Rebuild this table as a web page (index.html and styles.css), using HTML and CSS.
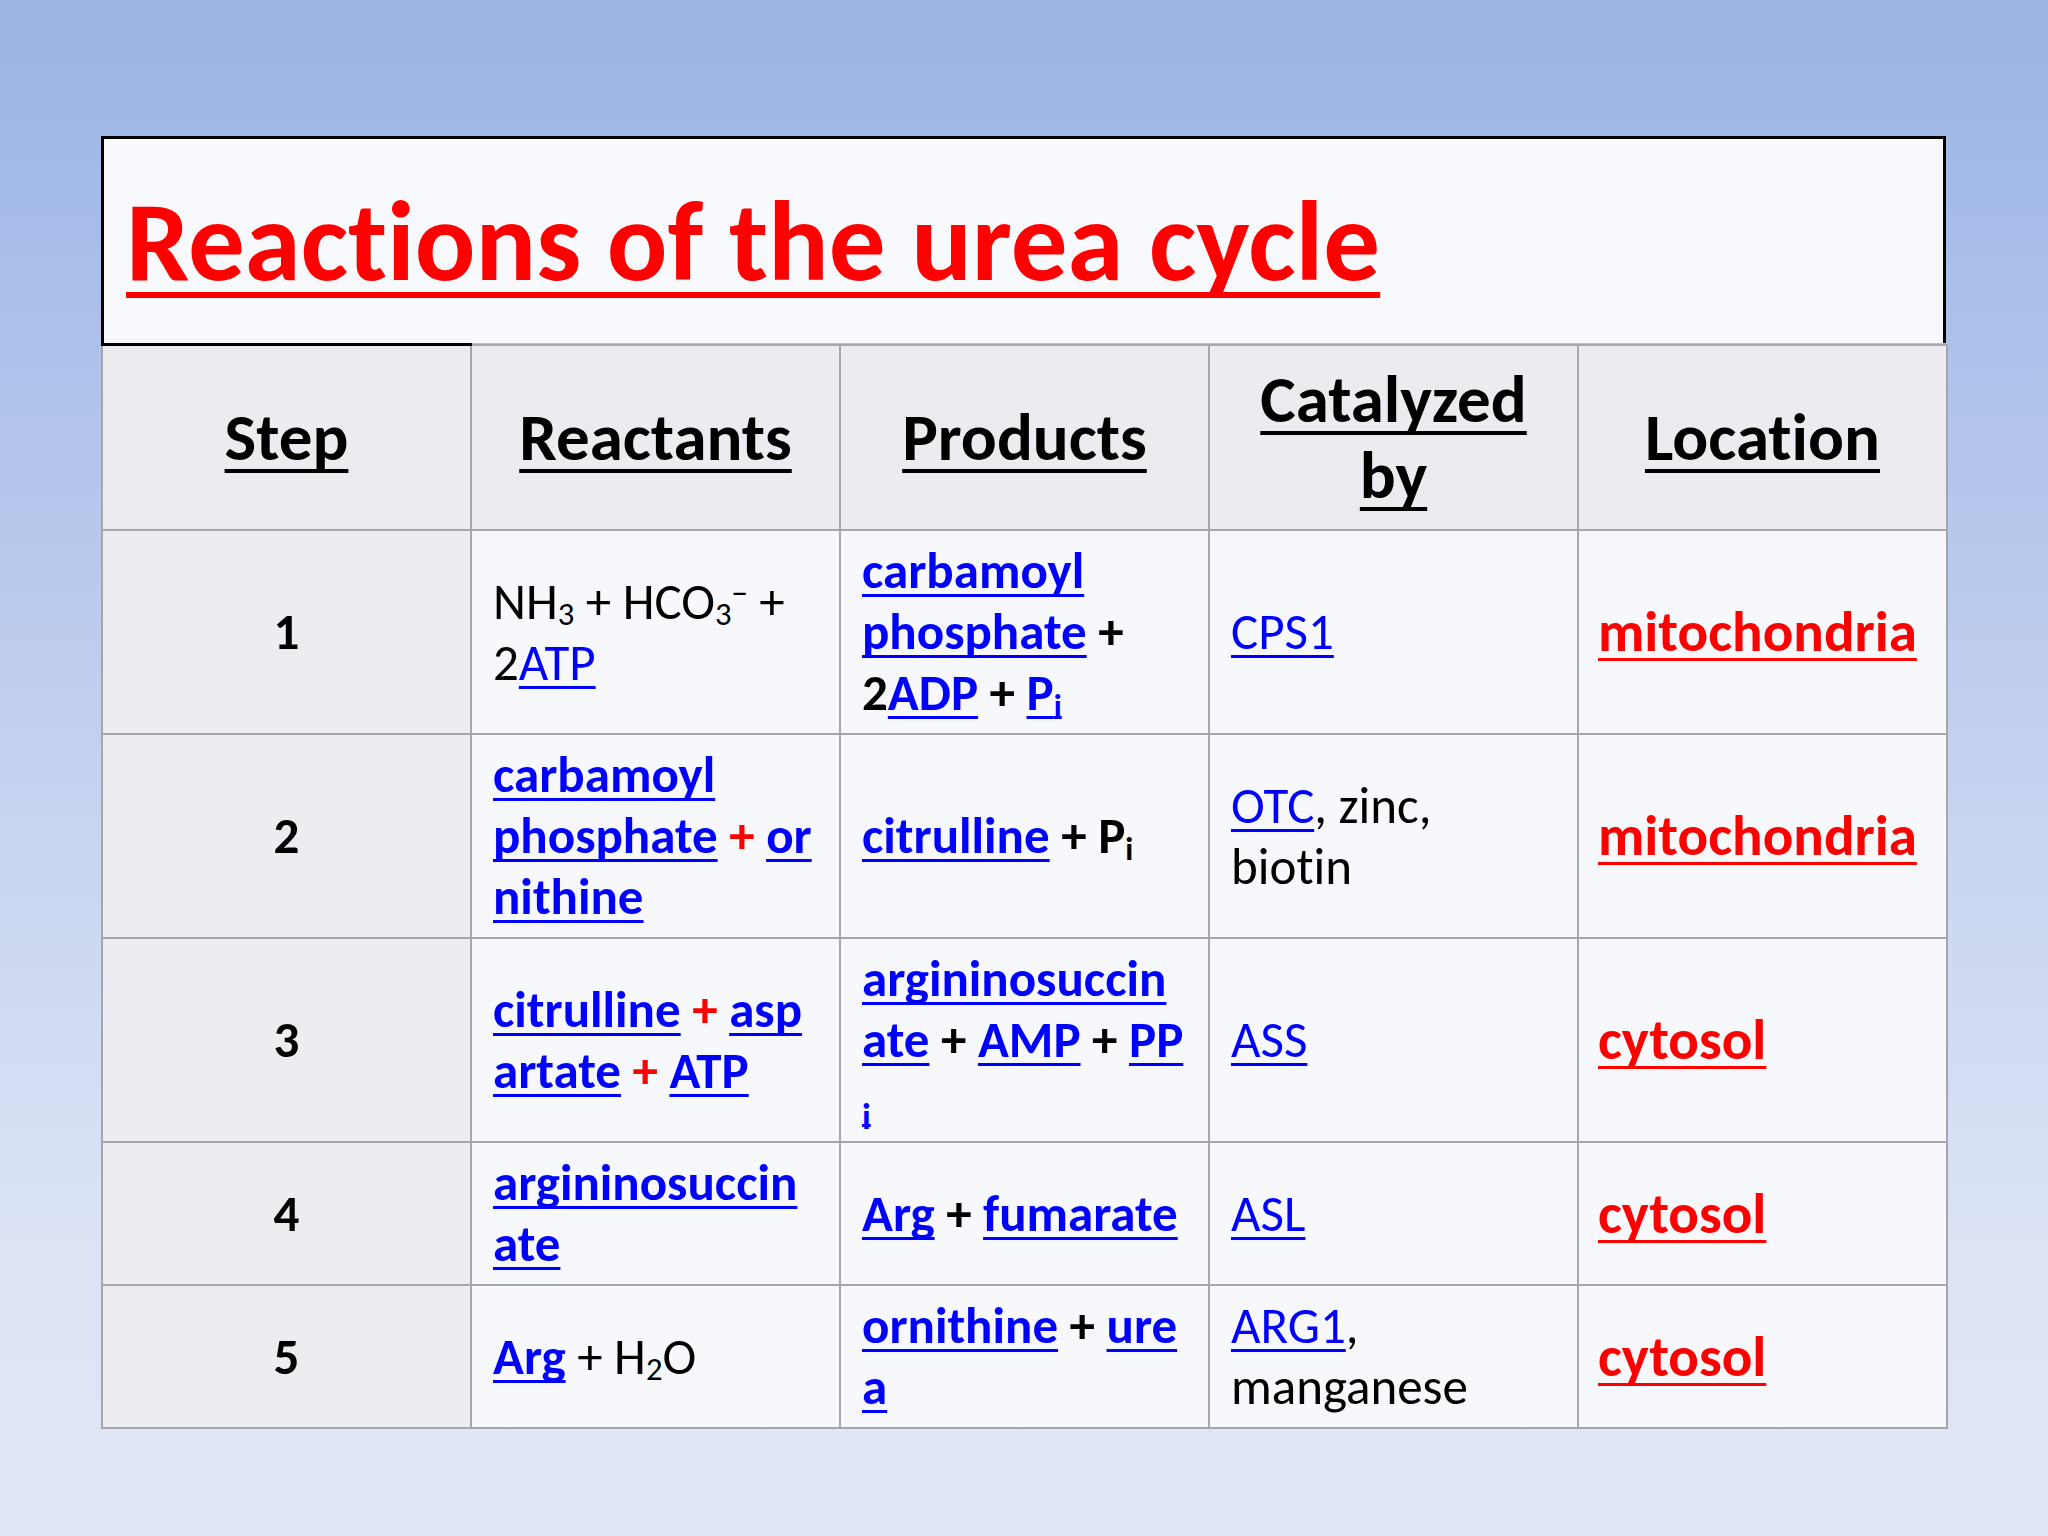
FILE: index.html
```html
<!DOCTYPE html>
<html lang="en">
<head>
<meta charset="utf-8">
<title>Reactions of the urea cycle</title>
<link rel="stylesheet" href="styles.css">
</head>
<body>
<div class="slide">
  <div class="title-box">
    <h1 class="title">Reactions of the urea cycle</h1>
  </div>
  <table class="urea">
    <colgroup>
      <col class="col"><col class="col"><col class="col"><col class="col"><col class="col">
    </colgroup>
    <thead>
      <tr class="head">
        <th class="h-step"><span class="hd">Step</span></th>
        <th><span class="hd">Reactants</span></th>
        <th><span class="hd">Products</span></th>
        <th><span class="hd">Catalyzed</span><br><span class="hd">by</span></th>
        <th><span class="hd">Location</span></th>
      </tr>
    </thead>
    <tbody>
      <tr class="tall">
        <td class="step">1</td>
        <td class="plain">NH<sub>3</sub> + HCO<sub>3</sub><sup>−</sup> +<br>2<a href="#" class="ln">ATP</a></td>
        <td class="bold"><a href="#" class="ln">carbamoyl<br>phosphate</a> +<br>2<a href="#" class="ln">ADP</a> + <a href="#" class="ln">P<sub>i</sub></a></td>
        <td class="plain"><a href="#" class="ln">CPS1</a></td>
        <td class="loc"><a href="#" class="lr">mitochondria</a></td>
      </tr>
      <tr class="tall">
        <td class="step">2</td>
        <td class="bold"><a href="#" class="ln">carbamoyl<br>phosphate</a> <span class="rp">+</span> <a href="#" class="ln">or<br>nithine</a></td>
        <td class="bold"><a href="#" class="ln">citrulline</a> + P<sub>i</sub></td>
        <td class="plain"><a href="#" class="ln">OTC</a>, zinc,<br>biotin</td>
        <td class="loc"><a href="#" class="lr">mitochondria</a></td>
      </tr>
      <tr class="tall">
        <td class="step">3</td>
        <td class="bold"><a href="#" class="ln">citrulline</a> <span class="rp">+</span> <a href="#" class="ln">asp<br>artate</a> <span class="rp">+</span> <a href="#" class="ln">ATP</a></td>
        <td class="bold"><a href="#" class="ln">argininosuccin<br>ate</a> + <a href="#" class="ln">AMP</a> + <a href="#" class="ln">PP</a><br><a href="#" class="ln"><sub class="lone">i</sub></a></td>
        <td class="plain"><a href="#" class="ln">ASS</a></td>
        <td class="loc"><a href="#" class="lr">cytosol</a></td>
      </tr>
      <tr class="short">
        <td class="step">4</td>
        <td class="bold"><a href="#" class="ln">argininosuccin<br>ate</a></td>
        <td class="bold"><a href="#" class="ln">Arg</a> + <a href="#" class="ln">fumarate</a></td>
        <td class="plain"><a href="#" class="ln">ASL</a></td>
        <td class="loc"><a href="#" class="lr">cytosol</a></td>
      </tr>
      <tr class="short">
        <td class="step">5</td>
        <td class="plain"><a href="#" class="ln b">Arg</a> + H<sub>2</sub>O</td>
        <td class="bold"><a href="#" class="ln">ornithine</a> + <a href="#" class="ln">ure<br>a</a></td>
        <td class="plain"><a href="#" class="ln">ARG1</a>,<br>manganese</td>
        <td class="loc"><a href="#" class="lr">cytosol</a></td>
      </tr>
    </tbody>
  </table>
</div>
</body>
</html>
```
FILE: styles.css
```css
html, body {
  margin: 0;
  padding: 0;
}
body {
  width: 2048px;
  height: 1536px;
  overflow: hidden;
  background: linear-gradient(180deg, #9bb4e4 0%, #b3c5ec 30%, #c9d5f0 55%, #dce3f5 82%, #e2e7f6 100%);
  font-family: Carlito, Lato, "Open Sans", sans-serif;
  font-variant-ligatures: none;
  color: #000;
}
.slide {
  padding: 136px 0 0 101px;
  width: 1845px;
}
.title-box {
  box-sizing: border-box;
  width: 1845px;
  height: 207px;
  border: 3px solid #000;
  border-bottom: none;
  background: #f8f9fc;
  display: flex;
  align-items: center;
  padding: 0 0 0 22px;
}
.title {
  margin: 0;
  font-size: 113px;
  line-height: 1;
  font-weight: 700;
  color: #ff0000;
  text-decoration: underline;
  text-decoration-thickness: 6px;
  text-underline-offset: 12px;
  text-decoration-skip-ink: none;
}
.urea {
  width: 1845px;
  table-layout: fixed;
  border-collapse: collapse;
}
.col { width: 369px; }
.urea th, .urea td {
  border: 2px solid #a5a7ac;
  padding: 0 6px 0 21px;
  vertical-align: middle;
  text-align: left;
  background: #f7f8fc;
}
.urea th {
  background: #ebebf0;
  text-align: center;
  padding: 0 6px;
  font-size: 67px;
  line-height: 76px;
  font-weight: 700;
}
.urea th.h-step {
  border-top: 3px solid #000;
}
.urea thead tr { height: 185px; }
.urea tr.tall { height: 204px; }
.urea tr.short { height: 143px; }
.hd {
  text-decoration: underline;
  text-decoration-thickness: 4px;
  text-underline-offset: 9px;
  text-decoration-skip-ink: none;
}
.urea td.step {
  background: #ededf1;
  text-align: center;
  padding: 0;
  font-size: 51px;
  font-weight: 700;
}
.urea td.plain, .urea td.bold {
  font-size: 51px;
  line-height: 61px;
}
.urea td.plain { font-weight: 400; }
.urea td.bold { font-weight: 700; }
.urea td.loc {
  font-size: 57px;
  font-weight: 700;
  padding-left: 19px;
}
a { color: inherit; }
.ln {
  color: #0000ff;
  text-decoration: underline;
  text-decoration-thickness: 3px;
  text-underline-offset: 6px;
  text-decoration-skip-ink: none;
}
.ln.b { font-weight: 700; }
.lr {
  color: #ff0000;
  text-decoration: underline;
  text-decoration-thickness: 3px;
  text-underline-offset: 7px;
  text-decoration-skip-ink: none;
}
.rp { color: #ff0000; }
sub, sup {
  font-size: 0.64em;
  line-height: 0;
  position: relative;
}
sub { vertical-align: -0.2em; }
sup { vertical-align: 0.45em; }
sub.lone { vertical-align: -0.3em; font-size: 0.7em; }
```
